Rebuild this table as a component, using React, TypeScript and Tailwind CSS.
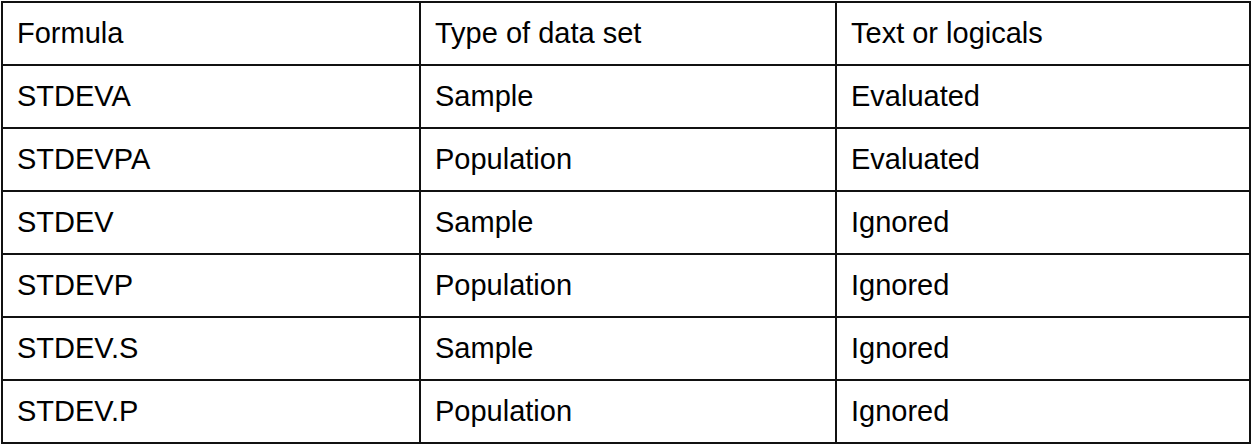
import React from 'react';

const rows: [string, string, string][] = [
    ['Formula', 'Type of data set', 'Text or logicals'],
    ['STDEVA', 'Sample', 'Evaluated'],
    ['STDEVPA', 'Population', 'Evaluated'],
    ['STDEV', 'Sample', 'Ignored'],
    ['STDEVP', 'Population', 'Ignored'],
    ['STDEV.S', 'Sample', 'Ignored'],
    ['STDEV.P', 'Population', 'Ignored'],
];

export default function App() {
    return (
        <div className="w-[1251px] h-[444px] bg-white pl-px pt-px font-['Liberation_Sans',Arial,sans-serif] text-black">
            <div className="grid grid-cols-[418px_416px_414px] border-l-2 border-t-2 border-[#111]">
                {rows.map((row, i) =>
                    row.map((cell, j) => (
                        <div
                            key={`${i}-${j}`}
                            className="h-[63px] flex items-center pl-[14px] border-r-2 border-b-2 border-[#111] text-[29px] leading-none"
                        >
                            {cell}
                        </div>
                    ))
                )}
            </div>
        </div>
    );
}
